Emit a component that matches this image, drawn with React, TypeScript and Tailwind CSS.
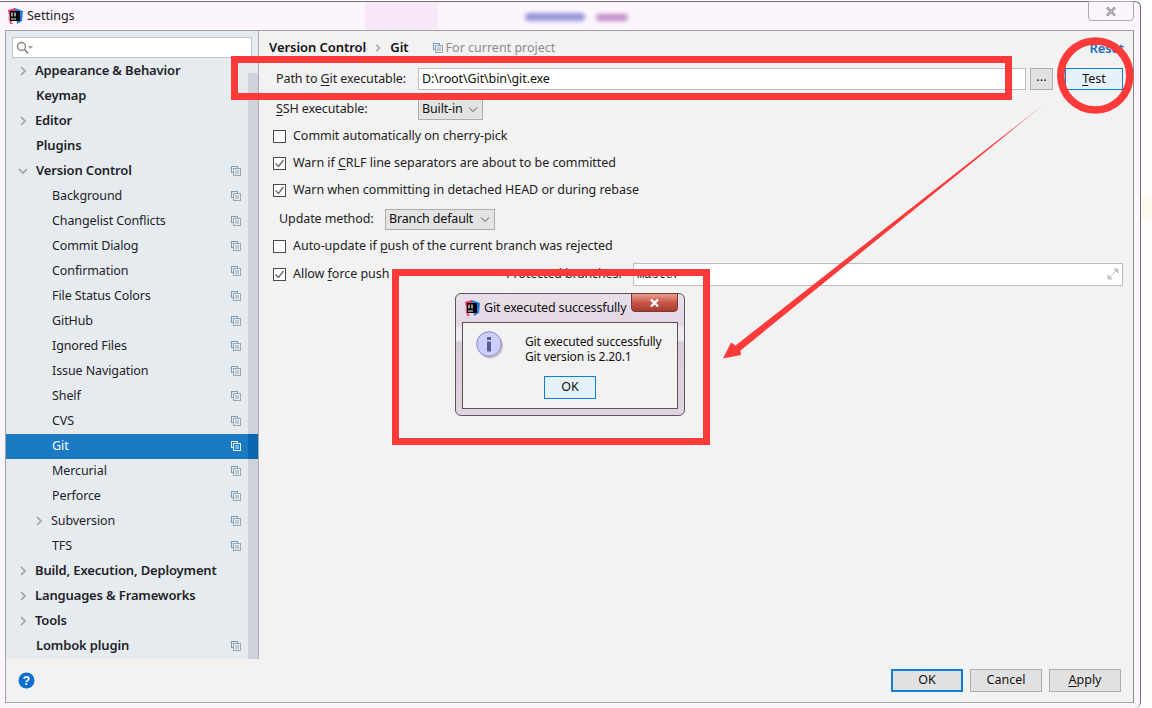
import React from "react";

const F = "font-['Noto_Sans','Liberation_Sans',sans-serif]";

function CopyIcon({ selected }: { selected?: boolean }) {
  const c = selected ? "#e8f2fa" : "#9aa7b0";
  const h = selected ? "#1a7bc4" : "#e6ebf0";
  return (
    <svg width="10" height="10" viewBox="0 0 10 10" className="shrink-0">
      <rect x="0.5" y="0.5" width="6" height="6" fill="none" stroke={selected ? c : "#6f9fc4"} />
      <rect x="2.5" y="2.5" width="7" height="7" fill={h} stroke={c} />
      <path d="M4 5h4M4 7h4" stroke={c} />
    </svg>
  );
}

function Chevron({ open, className = "" }: { open?: boolean; className?: string }) {
  return (
    <svg width="10" height="10" viewBox="0 0 10 10" className={className}>
      <path d={open ? "M1 3l4 4 4-4" : "M3 1l4 4-4 4"} fill="none" stroke="#a0a4a8" strokeWidth="1.7" />
    </svg>
  );
}

type Row = { t: string; lvl: 0 | 1; arrow?: "open" | "closed"; copy?: boolean; sel?: boolean };

const rows: Row[] = [
  { t: "Appearance & Behavior", lvl: 0, arrow: "closed" },
  { t: "Keymap", lvl: 0 },
  { t: "Editor", lvl: 0, arrow: "closed" },
  { t: "Plugins", lvl: 0 },
  { t: "Version Control", lvl: 0, arrow: "open", copy: true },
  { t: "Background", lvl: 1, copy: true },
  { t: "Changelist Conflicts", lvl: 1, copy: true },
  { t: "Commit Dialog", lvl: 1, copy: true },
  { t: "Confirmation", lvl: 1, copy: true },
  { t: "File Status Colors", lvl: 1, copy: true },
  { t: "GitHub", lvl: 1, copy: true },
  { t: "Ignored Files", lvl: 1, copy: true },
  { t: "Issue Navigation", lvl: 1, copy: true },
  { t: "Shelf", lvl: 1, copy: true },
  { t: "CVS", lvl: 1, copy: true },
  { t: "Git", lvl: 1, copy: true, sel: true },
  { t: "Mercurial", lvl: 1, copy: true },
  { t: "Perforce", lvl: 1, copy: true },
  { t: "Subversion", lvl: 1, copy: true, arrow: "closed" },
  { t: "TFS", lvl: 1, copy: true },
  { t: "Build, Execution, Deployment", lvl: 0, arrow: "closed" },
  { t: "Languages & Frameworks", lvl: 0, arrow: "closed" },
  { t: "Tools", lvl: 0, arrow: "closed" },
  { t: "Lombok plugin", lvl: 0, copy: true },
];

function TreeRow({ r }: { r: Row }) {
  return (
    <div className={`relative flex h-[25px] items-center pb-[2px] ${r.sel ? "bg-[#1a7bc4] text-white" : "text-[#1f2328]"}`}>
      {r.arrow && r.lvl === 0 && <Chevron open={r.arrow === "open"} className="absolute left-[12px] top-[7px]" />}
      {r.arrow && r.lvl === 1 && <Chevron className="absolute left-[28px] top-[7px]" />}
      <span
        className={
          r.lvl === 0
            ? r.arrow && r.arrow === "closed"
              ? "ml-[29px] text-[13px] font-semibold tracking-[-0.15px]"
              : "ml-[30px] text-[13px] font-semibold tracking-[-0.15px]"
            : r.arrow
            ? "ml-[45px] mt-[2px] text-[12.5px] tracking-[-0.1px]"
            : "ml-[46px] mt-[2px] text-[12.5px] tracking-[-0.1px]"
        }
      >
        {r.t}
      </span>
      {r.copy && (
        <span className="absolute right-[17px] top-[7px] flex">
          <CopyIcon selected={r.sel} />
        </span>
      )}
    </div>
  );
}

function Check({ on }: { on?: boolean }) {
  return (
    <span className="flex h-[13px] w-[13px] shrink-0 items-center justify-center border border-[#4a4a4a] bg-white">
      {on && (
        <svg width="11" height="11" viewBox="0 0 11 11">
          <path d="M1.5 5.5l3 3 5-6.5" fill="none" stroke="#6a6a6a" strokeWidth="1.3" />
        </svg>
      )}
    </span>
  );
}

function CheckRow({ on, children }: { on?: boolean; children: React.ReactNode }) {
  return (
    <div className="flex h-[27px] items-center gap-[7px] pl-[14px]">
      <Check on={on} />
      <span className="text-[12.5px] tracking-[-0.04px] text-[#222]">{children}</span>
    </div>
  );
}

function SelectBox({ w, children }: { w: string; children: React.ReactNode }) {
  return (
    <div className={`flex ${w} h-[21px] items-center justify-between border border-[#adadad] bg-[#e3e3e3] pl-[3px] pr-[4px] text-[12.5px] tracking-[-0.15px] text-[#111]`}>
      <span>{children}</span>
      <svg width="10" height="7" viewBox="0 0 10 7">
        <path d="M1 1.5l4 4 4-4" fill="none" stroke="#555" />
      </svg>
    </div>
  );
}

function FootBtn({ children, primary }: { children: React.ReactNode; primary?: boolean }) {
  return (
    <div className={`flex h-[23px] w-[72px] items-center justify-center bg-[#e1e1e1] text-[12.5px] text-[#111] ${primary ? "border-2 border-[#0f80d8]" : "border border-[#adadad]"}`}>
      {children}
    </div>
  );
}

function AppLogo({ size }: { size: number }) {
  return (
    <svg width={size} height={size} viewBox="0 0 16 16" className="shrink-0">
      <path d="M1 2l7-2 2 6-7 6z" fill="#e8336e" />
      <path d="M8 0l8 3-1 10-5 3z" fill="#1f7fe0" />
      <path d="M1 8l5 8h-3z" fill="#f0566e" />
      <rect x="3" y="3" width="10" height="10" fill="#000" />
      <rect x="4" y="10.5" width="5" height="1" fill="#fff" />
      <path d="M5 4.5v4M8 4.5v4" stroke="#fff" strokeWidth="1.2" />
    </svg>
  );
}

function Annotations() {
  return (
    <svg width="1152" height="708" viewBox="0 0 1152 708" className="pointer-events-none absolute left-0 top-0">
      <rect x="234.5" y="59.5" width="774" height="37" fill="none" stroke="#fd3a3a" strokeWidth="7" />
      <rect x="395.5" y="272.5" width="311" height="169" fill="none" stroke="#fd3a3a" strokeWidth="7" />
      <circle cx="1095.3" cy="75.4" r="34.5" fill="none" stroke="#fd3a3a" strokeWidth="7.5" />
      <defs>
        <linearGradient id="fade" x1="1053" y1="97" x2="1000" y2="138" gradientUnits="userSpaceOnUse">
          <stop offset="0" stopColor="#fd3a3a" stopOpacity="0.1" />
          <stop offset="1" stopColor="#fd3a3a" />
        </linearGradient>
      </defs>
      <path d="M1053 97L740.500 350.500L741 355L723 358.500L731 342.500L735.500 345.500Z" fill="url(#fade)" />
    </svg>
  );
}

function GitDialog() {
  return (
    <div className="absolute left-[455px] top-[293px] flex h-[123px] w-[230px] flex-col rounded-[6px] border border-[#5a5560] bg-[linear-gradient(180deg,#e9dfe9_0%,#e2d6e2_25%,#f2ecf2_30%,#f0eaf0_38%,#d8ccd9_40%,#dfd4df_100%)]">
      <div className="relative flex h-[28px] items-center pl-[8px]">
        <AppLogo size={16} />
        <span className="ml-[4px] text-[12.5px] tracking-[-0.15px] text-[#111]">Git executed successfully</span>
        <div className="absolute right-[6px] top-[-1px] flex h-[19px] w-[47px] items-center justify-center rounded-b-[4px] border border-[#7a3a34] bg-[linear-gradient(180deg,#e8a090_0%,#c8584a_50%,#a83a30_100%)]">
          <svg width="11" height="10" viewBox="0 0 11 10">
            <path d="M2 1.500l7 7M9 1.500l-7 7" stroke="#fff" strokeWidth="2.400" />
          </svg>
        </div>
      </div>
      <div className="mx-[6px] flex h-[87px] flex-col border border-[#555] bg-[#f2f2f2]">
        <div className="flex pl-[13px] pt-[8px]">
          <svg width="28" height="28" viewBox="0 0 28 28" className="shrink-0">
            <circle cx="14.500" cy="15" r="12.500" fill="#9c9c9c" opacity="0.5" />
            <circle cx="13" cy="13" r="12.300" fill="#ccceff" stroke="#8686bf" />
            <rect x="11" y="10.500" width="4" height="10" fill="#5c5c94" />
            <rect x="11" y="6" width="4" height="3" fill="#5c5c94" />
          </svg>
          <div className="ml-[21px] mt-[3px] flex flex-col text-[12px] leading-[15px] tracking-[-0.15px] text-[#111]">
            <span>Git executed successfully</span>
            <span>Git version is 2.20.1</span>
          </div>
        </div>
        <div className="flex justify-center pt-[12px]">
          <div className="flex h-[23px] w-[52px] items-center justify-center border border-[#0f80d8] bg-[#e5f1fb] text-[12.5px] text-[#111]">OK</div>
        </div>
      </div>
    </div>
  );
}

export default function App() {
  return (
    <div className={`relative h-[708px] w-[1152px] overflow-hidden bg-white ${F}`}>
      <div className="absolute left-[1141px] top-[196px] h-[24px] w-[11px] bg-[#fffaf0]" />
      <div className="ml-[-2px] mt-[1px] flex h-[707px] w-[1143px] flex-col rounded-tr-[6px] rounded-br-[6px] border border-b-0 border-[#6f6f6f] bg-[#fdf5fe]">
        <div className="relative flex h-[28px] shrink-0 items-center pl-[8px]">
          <AppLogo size={16} />
          <span className="ml-[4px] text-[12.5px] text-[#222]">Settings</span>
          <div className="absolute left-[1089px] top-[-1px] flex h-[20px] w-[46px] items-center justify-center rounded-b-[4px] border border-[#a9a9a9] bg-[#fbf6fc]">
            <svg width="12" height="11" viewBox="0 0 12 11">
              <path d="M2 1.500l8 8M10 1.500l-8 8" stroke="#777" strokeWidth="2.400" />
              <path d="M2 1.500l8 8M10 1.500l-8 8" stroke="#fff" strokeWidth="0.800" />
            </svg>
          </div>
          <div className="absolute left-[366px] top-[0px] h-[28px] w-[73px] bg-[#f8e9f9]" />
          <div className="absolute left-[526px] top-[11px] h-[8px] w-[60px] rounded-full bg-[#9495d8] blur-[2px]" />
          <div className="absolute left-[597px] top-[12px] h-[7px] w-[32px] rounded-full bg-[#c08ac8] blur-[2px]" />
        </div>

        <div className="mx-[6px] mb-[5px] flex min-h-0 flex-1 flex-col border border-[#a0a0a0] border-r-[#8e8e8e] bg-[#f2f2f2]">
          <div className="flex min-h-0 flex-1">
            <aside className="flex w-[253px] shrink-0 flex-col border-r border-[#a9adb1] bg-[#e6ebf0]">
              <div className="h-[33px] shrink-0 px-[6px] pt-[6px]">
                <div className="flex h-[21px] w-[240px] items-center gap-[1px] border border-[#c4c4c4] bg-white pl-[3px]">
                  <svg width="17" height="14" viewBox="0 0 17 14">
                    <circle cx="5.500" cy="5.500" r="4" fill="none" stroke="#8a8a8a" strokeWidth="1.500" />
                    <path d="M8.500 8.500l3.500 4" stroke="#8a8a8a" strokeWidth="1.800" />
                    <path d="M12 5h5l-2.500 3z" fill="#9a9a9a" />
                  </svg>
                </div>
              </div>
              <div className="relative min-h-0 flex-1 overflow-hidden">
                <div className="mt-[-5px]">
                  {rows.map((r) => (
                    <TreeRow key={r.t} r={r} />
                  ))}
                </div>
                <div className="absolute bottom-0 right-0 top-[9px] w-[10px] bg-[#cdd3d8]" />
                <div className="absolute right-0 top-[370px] h-[25px] w-[10px] bg-[#0a66ad]" />
              </div>
            </aside>

            <main className="relative min-w-0 flex-1">
              <div className="flex h-[35px] items-center pb-[1px] pl-[10px] text-[13px]">
                <span className="font-semibold tracking-[-0.05px] text-[#111]">Version Control</span>
                <span className="mx-[8px]">
                  <Chevron className="h-[8px] w-[8px]" />
                </span>
                <span className="font-semibold text-[#111]">Git</span>
                <span className="ml-[24px] flex items-center gap-[3px] text-[12.5px] text-[#8c8c8c]">
                  <CopyIcon />
                  For current project
                </span>
                <span className="absolute right-[9px] top-[8px] font-semibold tracking-[-0.15px] text-[#1a6dc0]">Reset</span>
              </div>

              <div className="flex h-[26px] items-center pl-[17px]">
                <span className="w-[142px] text-[12.5px] tracking-[-0.1px] text-[#222]">
                  Path to <span className="underline underline-offset-2">G</span>it executable:
                </span>
                <div className="flex h-[22px] w-[608px] items-center border border-[#bdbdbd] bg-white pl-[3px] text-[12.5px] tracking-[-0.1px] text-[#111]">D:\root\Git\bin\git.exe</div>
                <div className="ml-[4px] flex h-[22px] w-[23px] items-center justify-center border border-[#adadad] bg-[#e1e1e1] pb-[4px] text-[13px] text-[#111]">...</div>
                <div className="ml-[12px] flex h-[22px] w-[58px] items-center justify-center border border-[#0f80d8] bg-[#e5f1fb] text-[12.5px] text-[#111]">
                  <span><span className="underline underline-offset-2">T</span>est</span>
                </div>
              </div>

              <div className="flex h-[31px] items-center pl-[17px] pt-[3px]">
                <span className="w-[142px] text-[12.5px] tracking-[-0.1px] text-[#222]">
                  <span className="underline underline-offset-2">S</span>SH executable:
                </span>
                <SelectBox w="w-[65px]">Built-in</SelectBox>
              </div>

              <CheckRow>Commit automatically on cherry-pick</CheckRow>
              <CheckRow on>
                Warn if <span className="underline underline-offset-2">C</span>RLF line separators are about to be committed
              </CheckRow>
              <CheckRow on>Warn when committing in detached HEAD or during rebase</CheckRow>

              <div className="flex h-[29px] items-center pl-[20px] pt-[1px]">
                <span className="w-[106px] text-[12.5px] tracking-[-0.1px] text-[#222]">Update method:</span>
                <SelectBox w="w-[110px]">Branch default</SelectBox>
              </div>

              <CheckRow>
                Auto-update if <span className="underline underline-offset-2">p</span>ush of the current branch was rejected
              </CheckRow>

              <div className="flex h-[29px] items-center gap-[7px] pl-[14px]">
                <Check on />
                <span className="w-[206px] text-[12.5px] tracking-[-0.04px] text-[#222]">
                  Allow <span className="underline underline-offset-2">f</span>orce push
                </span>
                <span className="w-[120px] text-[12.5px] tracking-[-0.1px] text-[#222]">Protected branches:</span>
                <div className="relative flex h-[23px] w-[490px] items-center border border-[#bdbdbd] bg-white pl-[3px] font-['Liberation_Mono',monospace] text-[12px] text-[#111]">
                  master
                  <svg width="12" height="12" viewBox="0 0 12 12" className="absolute right-[3px] top-[4px]">
                    <path d="M7 1h4v4zM1 7v4h4zM9 3L3 9" fill="#bcc4c9" stroke="#bcc4c9" />
                  </svg>
                </div>
              </div>
            </main>
          </div>

          <footer className="flex h-[43px] shrink-0 items-start justify-between px-[12px] pt-[10px]">
            <svg width="18" height="18" viewBox="0 0 18 18" className="mt-[3px]">
              <circle cx="8.500" cy="8.500" r="8" fill="#0f6fce" />
              <text x="8.500" y="13" textAnchor="middle" fontSize="12" fontWeight="700" fill="#fff" fontFamily="Liberation Sans">?</text>
            </svg>
            <div className="flex gap-[7px]">
              <FootBtn primary>OK</FootBtn>
              <FootBtn>Cancel</FootBtn>
              <FootBtn><span><span className="underline underline-offset-2">A</span>pply</span></FootBtn>
            </div>
          </footer>
        </div>
      </div>
      <GitDialog />
      <Annotations />
    </div>
  );
}
